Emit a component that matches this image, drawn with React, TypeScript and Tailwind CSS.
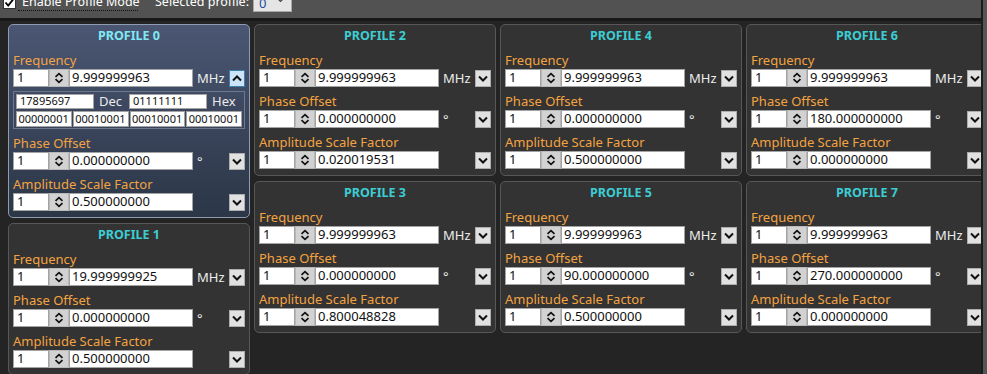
import React from "react";

type P = { n: number; freq: string; phase: string; amp: string; expanded?: boolean };

const profiles: P[] = [
  { n: 0, freq: "9.999999963", phase: "0.000000000", amp: "0.500000000", expanded: true },
  { n: 1, freq: "19.999999925", phase: "0.000000000", amp: "0.500000000" },
  { n: 2, freq: "9.999999963", phase: "0.000000000", amp: "0.020019531" },
  { n: 3, freq: "9.999999963", phase: "0.000000000", amp: "0.800048828" },
  { n: 4, freq: "9.999999963", phase: "0.000000000", amp: "0.500000000" },
  { n: 5, freq: "9.999999963", phase: "90.000000000", amp: "0.500000000" },
  { n: 6, freq: "9.999999963", phase: "180.000000000", amp: "0.000000000" },
  { n: 7, freq: "9.999999963", phase: "270.000000000", amp: "0.000000000" },
];

const font = { fontFamily: '"Noto Sans", "Open Sans", sans-serif' };

function SpinIcon() {
  return (
    <svg width="10" height="12" viewBox="0 0 10 12">
      <path d="M1.5 4.8 L5 1.6 L8.5 4.8 M1.5 7.2 L5 10.4 L8.5 7.2" stroke="#111" strokeWidth="1.7" fill="none" />
    </svg>
  );
}

function Chevron({ up }: { up?: boolean }) {
  return (
    <svg width="10" height="7" viewBox="0 0 10 7">
      <path d={up ? "M1 5.5 L5 1.5 L9 5.5" : "M1 1.5 L5 5.5 L9 1.5"} stroke="#111" strokeWidth="2" fill="none" />
    </svg>
  );
}

function InputRow({ value, unit, up }: { value: string; unit?: string; up?: boolean }) {
  return (
    <div className="flex items-center h-[18px] mt-[1px]">
      <div className="w-[36px] h-[18px] bg-white border border-[#a3a3a3] flex items-center pl-[3px] text-[13px] text-[#101010]">1</div>
      <div className="w-[20px] h-[18px] bg-[#d2d2d2] border border-[#b8b8b8] flex items-center justify-center">
        <SpinIcon />
      </div>
      <div className="w-[124px] h-[18px] bg-white border border-[#a3a3a3] flex items-center pl-[2px] text-[13px] text-[#101010]">{value}</div>
      <div className="w-[36px] pl-[4px] text-[13px] text-[#ececec] leading-[16px]">{unit}</div>
      <div
        className={
          up
            ? "w-[16px] h-[17px] bg-[#cce4f7] border border-[#3c7fb1] flex items-center justify-center"
            : "w-[16px] h-[17px] bg-[#e1e1e1] border border-[#adadad] flex items-center justify-center"
        }
      >
        <Chevron up={up} />
      </div>
    </div>
  );
}

function Label({ text }: { text: string }) {
  return <div className="h-[16px] leading-[16px] text-[13px] text-[#f3a341]">{text}</div>;
}

function Expanded() {
  const cells = ["00000001", "00010001", "00010001", "00010001"];
  return (
    <div className="mt-[4px] w-[232px] h-[38px] border border-[#6d7a8e] px-[2px] pt-[2px] flex flex-col gap-[2px]">
      <div className="flex items-center h-[15px]">
        <div className="w-[78px] h-[15px] bg-white border border-[#a3a3a3] flex items-center pl-[3px] text-[11px] text-[#101010]">17895697</div>
        <div className="w-[35px] pl-[5px] text-[13px] leading-[15px] text-[#ececec]">Dec</div>
        <div className="w-[78px] h-[15px] bg-white border border-[#a3a3a3] flex items-center pl-[3px] text-[11px] text-[#101010]">01111111</div>
        <div className="pl-[5px] text-[13px] leading-[15px] text-[#ececec]">Hex</div>
      </div>
      <div className="grid grid-cols-4 gap-[1px] h-[16px]">
        {cells.map((c, i) => (
          <div key={i} className="h-[16px] bg-white border border-[#a3a3a3] flex items-center justify-end pr-[2px] text-[11px] text-[#101010]">
            {c}
          </div>
        ))}
      </div>
    </div>
  );
}

function Profile({ p }: { p: P }) {
  const active = !!p.expanded;
  return (
    <div
      className={
        active
          ? "w-[242px] h-[194px] shrink-0 rounded-[5px] border border-[#8f9bb0] bg-gradient-to-b from-[#4b5673] to-[#2b3647] pl-[4px] pt-[3px] flex flex-col"
          : "w-[242px] h-[152px] shrink-0 rounded-[5px] border border-[#575757] bg-[#333333] pl-[4px] pt-[3px] flex flex-col"
      }
    >
      <div
        className={
          active
            ? "h-[16px] leading-[16px] text-center text-[12.5px] font-bold text-[#7ee9f5] pr-[4px]"
            : "h-[16px] leading-[16px] text-center text-[12.5px] font-bold text-[#3ccdd3] pr-[4px]"
        }
      >
        PROFILE {p.n}
      </div>
      <div className="mt-[8px] flex flex-col">
        <Label text="Frequency" />
        <InputRow value={p.freq} unit="MHz" up={active} />
      </div>
      {active && <Expanded />}
      <div className="mt-[6px] flex flex-col">
        <Label text="Phase Offset" />
        <InputRow value={p.phase} unit="°" />
      </div>
      <div className="mt-[6px] flex flex-col">
        <Label text="Amplitude Scale Factor" />
        <InputRow value={p.amp} />
      </div>
    </div>
  );
}

export default function App() {
  const cols = [
    [profiles[0], profiles[1]],
    [profiles[2], profiles[3]],
    [profiles[4], profiles[5]],
    [profiles[6], profiles[7]],
  ];
  return (
    <div className="w-[987px] h-[374px] overflow-hidden flex bg-[#242424]" style={font}>
      <div className="w-[981px] h-[374px] flex flex-col overflow-hidden">
        <div className="h-[18px] shrink-0 bg-[#525252] flex items-start overflow-hidden">
          <div className="flex items-center -mt-[6px] h-[16px] text-[13px] leading-[16px] text-white">
            <div className="ml-[3px] w-[13px] h-[13px] bg-white border border-[#333] flex items-center justify-center">
              <svg width="11" height="11" viewBox="0 0 11 11">
                <path d="M1.5 5.5 L4.2 8.5 L9.5 2" stroke="#000" strokeWidth="1.8" fill="none" />
              </svg>
            </div>
            <div className="ml-[2px] w-[120px] pl-[4px] h-[17px] border-b border-dotted border-[#111] mt-[1px] whitespace-nowrap text-[12.5px]">
              Enable Profile Mode
            </div>
            <div className="ml-[17px] w-[98px] whitespace-nowrap text-[12.5px]">Selected profile:</div>
            <div className="w-[39px] h-[19px] mt-[1px] bg-[#e5e5e5] border border-[#a8a8a8] flex items-end pb-[1px]">
              <span className="pl-[5px] text-[#1c4fa0] leading-[14px]">0</span>
              <span className="ml-auto mr-[7px] mb-[7px]">
                <svg width="7" height="5" viewBox="0 0 7 5">
                  <path d="M1 1 L3.5 3.5 L6 1" stroke="#444" strokeWidth="1.2" fill="none" />
                </svg>
              </span>
            </div>
          </div>
        </div>
        <div className="h-[3px] shrink-0 bg-[#181818]" />
        <div className="flex gap-[4px] pl-[8px] pt-[3px]">
          {cols.map((c, i) => (
            <div key={i} className="flex flex-col gap-[5px] shrink-0">
              {c.map((p) => (
                <Profile key={p.n} p={p} />
              ))}
            </div>
          ))}
        </div>
      </div>
      <div className="w-[2px] h-[374px] bg-[#1c1c1c]" />
      <div className="w-[4px] h-[374px] bg-[#555555]" />
    </div>
  );
}
